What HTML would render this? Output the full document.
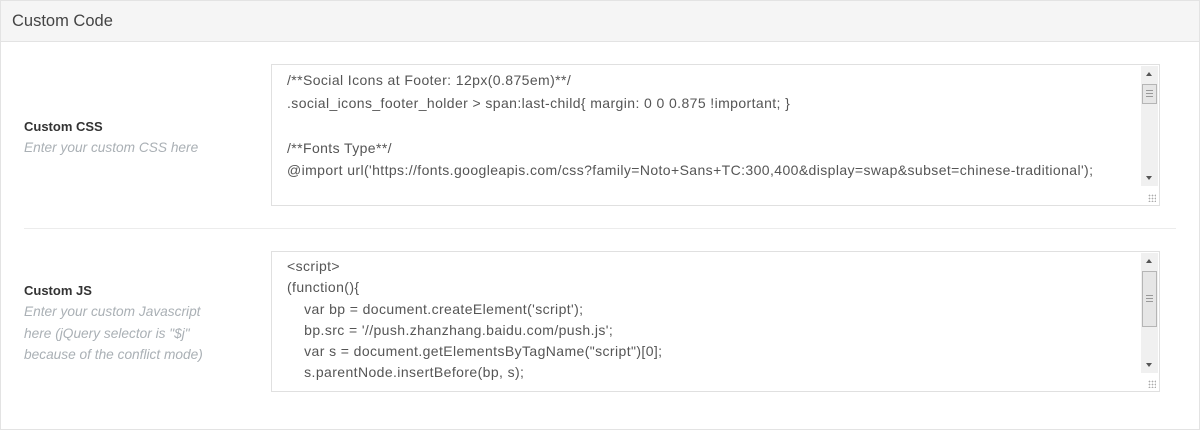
<!DOCTYPE html>
<html><head><meta charset="utf-8"><style>
*{margin:0;padding:0;box-sizing:border-box}
body{width:1200px;height:426px;background:#fff;font-family:"Liberation Sans",sans-serif;overflow:hidden;position:relative}
.panel{position:absolute;left:0;top:0;width:1200px;height:430px;border:1px solid #e3e3e3}
.hdr{height:41px;background:#f5f5f5;border-bottom:1px solid #e3e3e3;font-size:16.5px;color:#444;padding:11px 0 0 11px}
.lbl{position:absolute;left:24px;font-size:13px;font-weight:bold;color:#333}
.desc{position:absolute;left:24px;font-size:13.7px;font-style:italic;color:#aab0b5;line-height:21.5px}
.ta{position:absolute;left:271px;width:889px;border:1px solid #e0e0e0;background:#fff;font-size:14px;letter-spacing:0.4px;color:#555;padding:4px 0 0 15px;white-space:pre;overflow:hidden}
.sb{position:absolute;right:1px;top:1px;width:17px;background:#f0f0f0}
.sb .up,.sb .dn{position:absolute;left:5px;width:0;height:0;border-left:3.5px solid transparent;border-right:3.5px solid transparent}
.sb .up{top:6px;border-bottom:4px solid #555}
.sb .dn{bottom:6px;border-top:4px solid #555}
.thumb{position:absolute;left:1px;width:15px;height:20px;background:#e6e6e6;border:1px solid #b5b5b5}
.thumb i{display:block;width:7px;height:1px;background:#999;margin:2px auto 0}
.grip{position:absolute;right:3px;bottom:3px;width:8px;height:8px;background:radial-gradient(circle,#aaa 0.7px,transparent 1px) 0 0/3px 3px}
.hr{position:absolute;left:24px;top:228px;width:1152px;height:1px;background:#ececec}
</style></head><body>
<div class="panel"><div class="hdr">Custom Code</div></div>
<div class="lbl" style="top:119px">Custom CSS</div>
<div class="desc" style="top:137px">Enter your custom CSS here</div>
<div class="ta" style="top:64px;height:142px;line-height:22.5px">/**Social Icons at Footer: 12px(0.875em)**/
.social_icons_footer_holder &gt; span:last-child{ margin: 0 0 0.875 !important; }

/**Fonts Type**/
@import url('https://fonts.googleapis.com/css?family=Noto+Sans+TC:300,400&amp;display=swap&amp;subset=chinese-traditional');<div class="sb" style="height:120px"><div class="up"></div><div class="thumb" style="top:18px"><i style="margin-top:5px"></i><i></i><i></i></div><div class="dn"></div></div><div class="grip"></div></div>
<div class="hr"></div>
<div class="lbl" style="top:283px">Custom JS</div>
<div class="desc" style="top:301px">Enter your custom Javascript<br>here (jQuery selector is "$j"<br>because of the conflict mode)</div>
<div class="ta" style="top:251px;height:141px;line-height:21.3px">&lt;script&gt;
(function(){
    var bp = document.createElement('script');
    bp.src = '//push.zhanzhang.baidu.com/push.js';
    var s = document.getElementsByTagName("script")[0];
    s.parentNode.insertBefore(bp, s);<div class="sb" style="height:120px"><div class="up"></div><div class="thumb" style="top:18px;height:56px"><i style="margin-top:23px"></i><i></i><i></i></div><div class="dn"></div></div><div class="grip"></div></div>
</body></html>
